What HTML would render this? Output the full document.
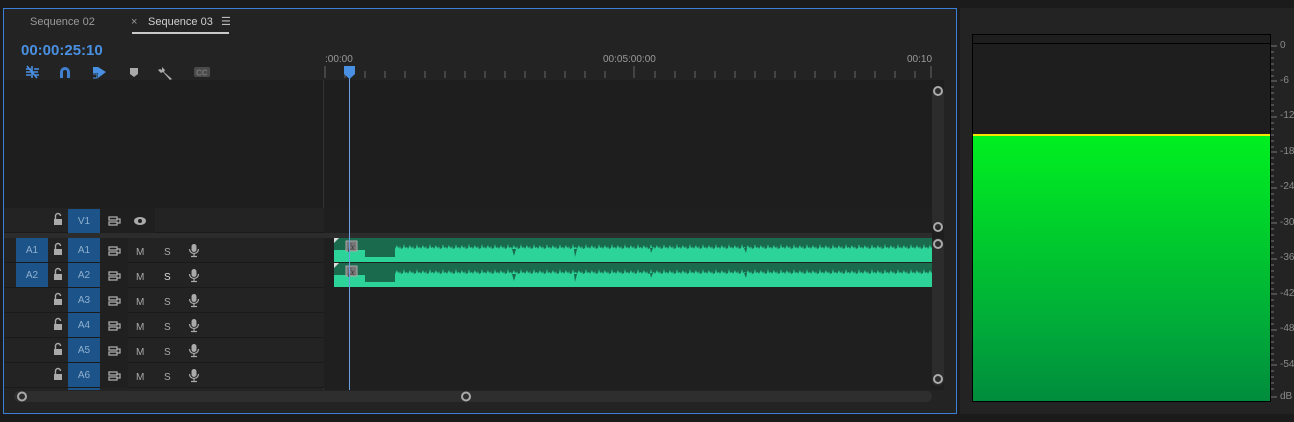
<!DOCTYPE html>
<html><head><meta charset="utf-8"><style>
*{margin:0;padding:0;box-sizing:border-box}
body{width:1294px;height:422px;background:#1b1b1b;position:relative;overflow:hidden;font-family:"Liberation Sans",sans-serif;color:#9a9a9a}
.a{position:absolute}
.t{font-size:11px}
.blue{background:#1c5389;color:#8fb0d0;font-size:10px;text-align:center;line-height:25px}
.row{position:absolute;left:4px;width:928px;height:25px;border-bottom:1px solid #1a1a1a}
.sc{position:absolute;left:1280px;font-size:10px;color:#8a8a8a}
</style></head><body>
<div class="a" style="left:3px;top:8px;width:954px;height:406px;background:#232323;border:1px solid #3d7fd6"></div>
<div class="a t" style="left:30px;top:16px;color:#9a9a9a">Sequence 02</div>
<div class="a t" style="left:131px;top:16px;color:#9a9a9a">×</div>
<div class="a t" style="left:148px;top:16px;color:#d0d0d0">Sequence 03</div>
<div class="a t" style="left:221px;top:15px;color:#bbb">☰</div>
<div class="a" style="left:132px;top:32px;width:97px;height:2px;background:#c8c8c8"></div>
<div class="a" style="left:21px;top:42px;font-size:15px;font-weight:bold;color:#4a90e2">00:00:25:10</div>
<svg class="a" style="left:24px;top:64px" width="190" height="16">
<g stroke="#4a90e2" stroke-width="1.6" fill="none"><path d="M8 2v12M2 5h5M10 5h5M2 8h12M2 11h5M10 11h5M3 2l10 12"/></g>
<path d="M36 14V8a5 5 0 0 1 10 0v6h-3V8a2 2 0 0 0-4 0v6z" fill="#3f80cf"/>
<path d="M69 3h5v6h-5zM74 3l8 5-8 6z" fill="#4a90e2"/><path d="M69 10h4v4h-4" stroke="#4a90e2" fill="none"/>
<path d="M106 4h8v6l-4 3-4-3z" fill="#aaa"/>
<path d="M138 3l3 3-1 2 8 7-2 1-7-8-2 1-3-3 2-1 2 1z" fill="#aaa"/>
<rect x="170" y="3" width="16" height="10" rx="2" fill="#4a4a4a"/><text x="172" y="11.5" font-size="8" font-weight="bold" fill="#777" font-family="Liberation Sans">CC</text>
</svg>
<div class="a" style="left:324px;top:54px;width:608px;height:26px;background:#232323"></div>
<div class="a t" style="left:325px;top:54px;font-size:10px">:00:00</div>
<div class="a t" style="left:603px;top:54px;font-size:10px">00:05:00:00</div>
<div class="a t" style="left:907px;top:54px;font-size:10px">00:10</div>
<svg class="a" style="left:324px;top:66px" width="610" height="14">
<g stroke="#666"><path d="M1 0v12M310 0v12M607 0v12"/>
<path d="M21 5v7M41 5v7M61 5v7M81 5v7M101 5v7M121 5v7M141 5v7M161 5v7M181 5v7M201 5v7M221 5v7M241 5v7M261 5v7M281 5v7M331 5v7M351 5v7M371 5v7M391 5v7M411 5v7M431 5v7M451 5v7M471 5v7M491 5v7M511 5v7M531 5v7M551 5v7M571 5v7M591 5v7"/></g></svg>
<div class="a" style="left:4px;top:80px;width:928px;height:128px;background:#1e1e1e"></div>
<div class="a" style="left:323px;top:80px;width:1px;height:310px;background:#333"></div>
<div class="row" style="top:208px;background:#232323"></div>
<div class="a" style="left:4px;top:233px;width:928px;height:5px;background:#2c2c2c"></div>
<div class="row" style="top:238px;background:#232323"></div>
<div class="row" style="top:263px;background:#232323"></div>
<div class="row" style="top:288px;background:#232323"></div>
<div class="row" style="top:313px;background:#232323"></div>
<div class="row" style="top:338px;background:#232323"></div>
<div class="row" style="top:363px;background:#232323"></div>
<div class="a" style="left:324px;top:208px;width:608px;height:182px;background:#1f1f1f"></div>
<div class="a" style="left:324px;top:233px;width:608px;height:5px;background:#2c2c2c"></div>
<div class="a" style="left:100px;top:208px;width:55px;height:25px;background:#1f1f1f"></div>
<div class="a" style="left:100px;top:238px;width:28px;height:150px;background:#202020"></div>
<div class="a blue" style="left:68px;top:209px;width:32px;height:24px">V1</div>
<div class="a blue" style="left:16px;top:238px;width:32px;height:24px">A1</div>
<div class="a blue" style="left:16px;top:263px;width:32px;height:24px">A2</div>
<div class="a blue" style="left:68px;top:238px;width:32px;height:24px">A1</div>
<div class="a blue" style="left:68px;top:263px;width:32px;height:24px">A2</div>
<div class="a blue" style="left:68px;top:288px;width:32px;height:24px">A3</div>
<div class="a blue" style="left:68px;top:313px;width:32px;height:24px">A4</div>
<div class="a blue" style="left:68px;top:338px;width:32px;height:24px">A5</div>
<div class="a blue" style="left:68px;top:363px;width:32px;height:24px">A6</div>
<div class="a" style="left:68px;top:388px;width:32px;height:2px;background:#1c5389"></div>
<svg class="a" style="left:0;top:208px" width="210" height="182">
<defs>
<g id="lk"><rect x="-4" y="-1" width="8" height="6" fill="#aaa"/><path d="M-2.5 -1v-3a2.5 2.5 0 0 1 5 0" stroke="#aaa" stroke-width="1.4" fill="none"/></g>
<g id="tg" stroke="#aaa" stroke-width="1.3" fill="none"><rect x="-5" y="-4" width="8" height="3"/><rect x="-5" y="1" width="8" height="3"/><path d="M3 -2h3v4h-3"/></g>
<g id="mic"><rect x="-2.5" y="-6" width="5" height="8" rx="2.5" fill="#aaa"/><path d="M-4.5 -1a4.5 4.5 0 0 0 9 0M0 3.5v3M-3 6.5h6" stroke="#aaa" stroke-width="1.2" fill="none"/></g>
</defs>
<use href="#lk" x="58" y="12"/><use href="#tg" x="114" y="13"/>
<ellipse cx="140" cy="13" rx="6" ry="4" fill="#aaa"/><circle cx="140" cy="13" r="2" fill="#1f1f1f"/>
<g font-family="Liberation Sans" font-size="10" fill="#aaa">
<use href="#lk" x="58" y="42"/><use href="#tg" x="114" y="43"/><text x="136" y="47">M</text><text x="164" y="47">S</text><use href="#mic" x="194" y="42"/>
<use href="#lk" x="58" y="67"/><use href="#tg" x="114" y="68"/><text x="136" y="72">M</text><text x="164" y="72" fill="#ddd">S</text><use href="#mic" x="194" y="67"/>
<use href="#lk" x="58" y="92"/><use href="#tg" x="114" y="93"/><text x="136" y="97">M</text><text x="164" y="97">S</text><use href="#mic" x="194" y="92"/>
<use href="#lk" x="58" y="117"/><use href="#tg" x="114" y="118"/><text x="136" y="122">M</text><text x="164" y="122">S</text><use href="#mic" x="194" y="117"/>
<use href="#lk" x="58" y="142"/><use href="#tg" x="114" y="143"/><text x="136" y="147">M</text><text x="164" y="147">S</text><use href="#mic" x="194" y="142"/>
<use href="#lk" x="58" y="167"/><use href="#tg" x="114" y="168"/><text x="136" y="172">M</text><text x="164" y="172">S</text><use href="#mic" x="194" y="167"/>
</g></svg>
<svg class="a" style="left:334px;top:238px" width="598" height="50">
<defs>
<pattern id="spk" x="0" y="0" width="13" height="24" patternUnits="userSpaceOnUse">
<path d="M0 24V11l1-3 1 3 2-1 1-4 1 4 2-1 1 2 2-4 1 3 1-1V24z" fill="#2dd49a"/>
</pattern>
<g id="clip">
<rect x="0" y="0" width="598" height="24" fill="#1a6b4e"/>
<rect x="0" y="12" width="31" height="12" fill="#2dd49a"/>
<rect x="31" y="19" width="30" height="5" fill="#2dd49a"/>
<rect x="61" y="0" width="537" height="24" fill="url(#spk)"/>
<rect x="61" y="12" width="537" height="12" fill="#2dd49a"/>
<path d="M178 11l2 7 2-7zM240 11l1 8 2-8zM316 10l1 5 2-5zM410 10l2 5 1-5z" fill="#1a6b4e"/>
<rect x="12" y="3" width="11" height="10" fill="#777" stroke="#aaa"/><text x="14" y="12" font-size="9" font-style="italic" fill="#333" font-family="Liberation Serif">fx</text>
<path d="M0 0h5L0 5z" fill="#ddd"/>
</g></defs>
<use href="#clip"/>
<use href="#clip" y="25"/>
</svg>
<div class="a" style="left:349px;top:78px;width:1px;height:312px;background:#6aa0e0"></div>
<svg class="a" style="left:344px;top:66px" width="11" height="13"><path d="M0 0h11v8l-5.5 5L0 8z" fill="#4a90e2"/></svg>
<div class="a" style="left:932px;top:80px;width:12px;height:310px;background:#1e1e1e"></div>
<div class="a" style="left:932px;top:88px;width:12px;height:140px;border-radius:6px;background:#2c2c2c"></div>
<div class="a" style="left:932px;top:238px;width:12px;height:148px;border-radius:6px;background:#2c2c2c"></div>
<svg class="a" style="left:930px;top:80px" width="16" height="310"><g stroke="#aaa" stroke-width="2" fill="none"><circle cx="8" cy="11" r="4"/><circle cx="8" cy="147" r="4"/><circle cx="8" cy="164" r="4"/><circle cx="8" cy="299" r="4"/></g></svg>
<div class="a" style="left:14px;top:391px;width:918px;height:11px;border-radius:6px;background:#2e2e2e"></div>
<svg class="a" style="left:14px;top:389px" width="460" height="15"><g stroke="#aaa" stroke-width="2" fill="none"><circle cx="8" cy="7.5" r="4"/><circle cx="452" cy="7.5" r="4"/></g></svg>
<div class="a" style="left:960px;top:8px;width:334px;height:406px;background:#232323"></div>
<div class="a" style="left:972px;top:34px;width:299px;height:368px;background:#1e1e1e;border:1px solid #000"></div>
<div class="a" style="left:973px;top:43px;width:297px;height:1px;background:#000"></div>
<div class="a" style="left:973px;top:134px;width:297px;height:2px;background:#f5e600"></div>
<div class="a" style="left:973px;top:136px;width:297px;height:265px;background:linear-gradient(#00f020,#00a83a 75%,#008c3c)"></div>
<div class="sc" style="top:40px">0</div><div class="sc" style="top:75px">-6</div><div class="sc" style="top:110px">-12</div>
<div class="sc" style="top:146px">-18</div><div class="sc" style="top:181px">-24</div><div class="sc" style="top:217px">-30</div>
<div class="sc" style="top:252px">-36</div><div class="sc" style="top:288px">-42</div><div class="sc" style="top:323px">-48</div>
<div class="sc" style="top:359px">-54</div><div class="sc" style="top:391px">dB</div>
<svg class="a" style="left:1270px;top:40px" width="8" height="362"><g stroke="#777"><path d="M1 6h6M1 41h6M1 77h6M1 112h6M1 148h6M1 183h6M1 219h6M1 254h6M1 290h6M1 325h6M1 357h6"/>
<path d="M1 12h3M1 18h3M1 24h3M1 30h3M1 36h3M1 47h3M1 53h3M1 59h3M1 65h3M1 71h3M1 83h3M1 89h3M1 95h3M1 101h3M1 107h3M1 118h3M1 124h3M1 130h3M1 136h3M1 142h3M1 154h3M1 160h3M1 166h3M1 172h3M1 178h3M1 189h3M1 195h3M1 201h3M1 207h3M1 213h3M1 225h3M1 231h3M1 237h3M1 243h3M1 249h3M1 260h3M1 266h3M1 272h3M1 278h3M1 284h3M1 296h3M1 302h3M1 308h3M1 314h3M1 320h3M1 331h3M1 337h3M1 343h3M1 349h3M1 363h3"/></g></svg>
</body></html>
